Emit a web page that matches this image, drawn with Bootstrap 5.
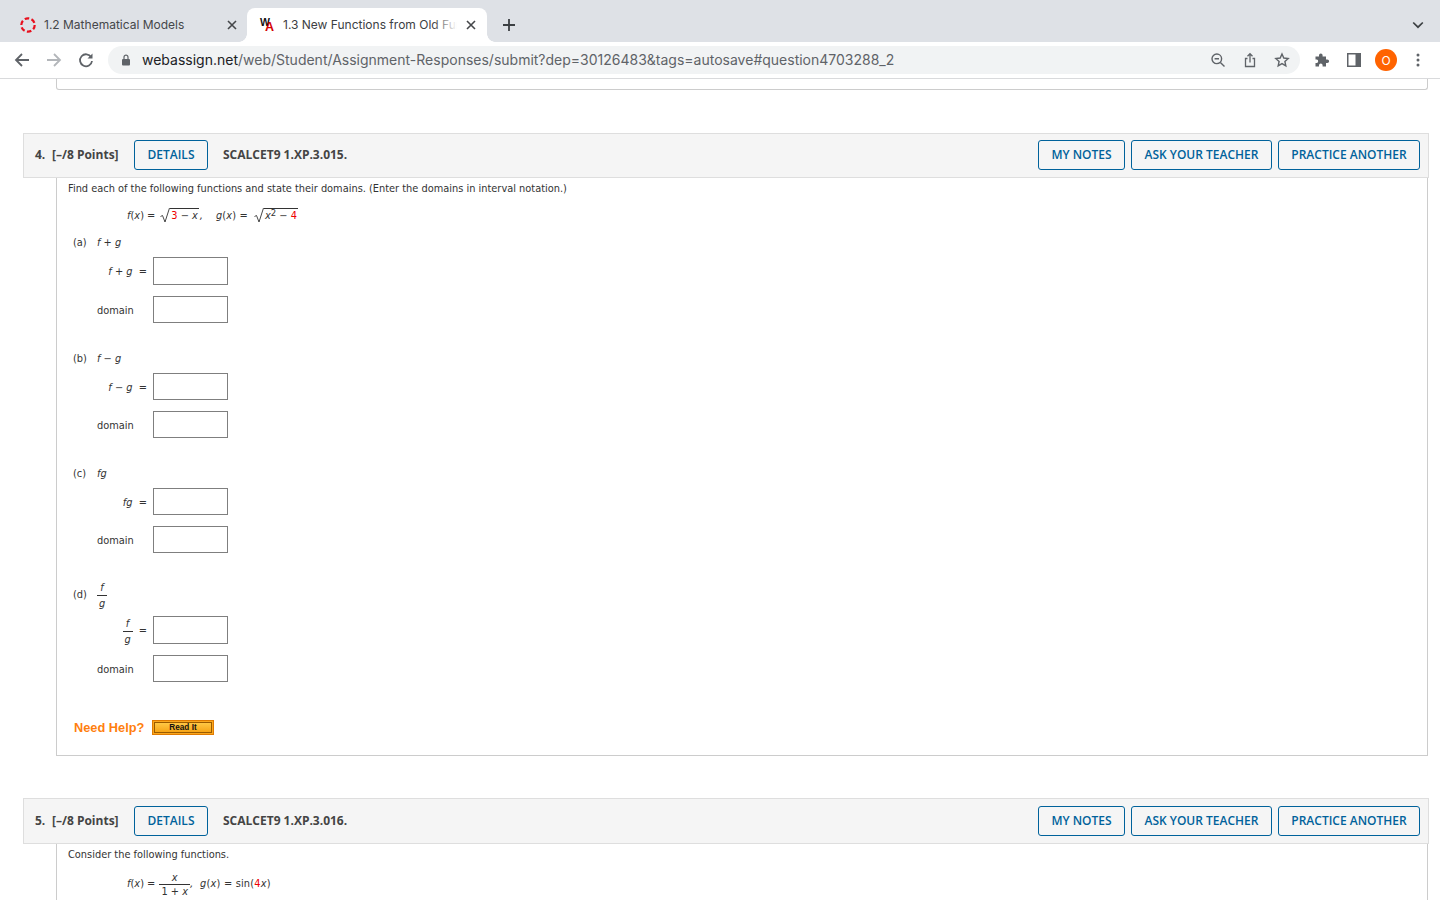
<!DOCTYPE html>
<html lang="en">
<head>
<meta charset="utf-8">
<title>1.3 New Functions from Old Functions</title>
<link href="https://cdn.jsdelivr.net/npm/bootstrap@5.3.0/dist/css/bootstrap.min.css" rel="stylesheet">
<style>
html,body{height:900px;overflow:hidden;background:#fff}
body{font-family:"DejaVu Sans","Liberation Sans",sans-serif;font-size:9.82px;line-height:13px;color:#333}
.tabstrip{height:42px;background:#dee1e6;padding:8px 16px 0 8px;font-family:Inter,"Liberation Sans",sans-serif;font-size:12px;color:#45474a}
.brtab{width:239px;height:34px;padding:0 9px 1px 12px;position:relative}
.brtab-active{width:240px;background:#fff;border-radius:8px 8px 0 0;color:#3c4043;padding-left:12px;padding-right:10px}
.brtab-active::before,.brtab-active::after{content:"";position:absolute;bottom:0;width:8px;height:8px;background:radial-gradient(circle at 0 0,#dee1e6 7.5px,#fff 8px)}
.brtab-active::before{left:-8px}
.brtab-active::after{right:-8px;background:radial-gradient(circle at 100% 0,#dee1e6 7.5px,#fff 8px)}
.tabfav{width:16px;height:16px;flex:none}
.tabname{white-space:nowrap;overflow:hidden;flex:1;margin-left:8px;position:relative}
.tabfade::after{content:"";position:absolute;top:0;right:0;width:24px;height:100%;background:linear-gradient(90deg,rgba(255,255,255,0),#fff)}
.wa-logo{font:bold 11px/1 "Liberation Sans",sans-serif;position:relative;display:block}
.wa-w{position:absolute;left:1px;top:0;color:#111;font-size:10.5px}
.wa-a{position:absolute;left:6px;top:4px;color:#d40000;font-size:12.5px}
.tabclose{width:12px;height:12px;flex:none}
.plusbtn{width:14px;height:14px;margin-left:15px;margin-top:10px}
.chev{width:12px;height:8px;margin-top:13px}
.toolbar{height:37px;background:#fff;border-bottom:1px solid #d9dadc;padding:4px 0 0 14px}
.tb-ico{width:16px;height:16px;flex:none;color:#5f6368}
.navset{height:28px}
.omni{width:1192px;flex:none;height:28px;margin-left:14px;background:#f1f3f4;border-radius:14px;padding:0 10px 1px 13px;font-family:Inter,"Liberation Sans",sans-serif;font-size:14px;color:#5f6368;white-space:nowrap}
.omni-host{color:#202124}
.omni-url{margin-left:3px}
.extset{height:28px;margin-left:14px}
.avatar-o{width:22px;height:22px;margin:0 -3px;background:#ff6300;color:#fff;font-family:Inter,"Liberation Sans",sans-serif;font-size:12px}
.pagearea{padding:0 12px 0 23px}
.prev-end{height:11px;margin-left:33px;border:1px solid #ccc;border-top:0;border-radius:0 0 3px 3px}
.qhead{background:#f5f5f5;border:1px solid #dedede;height:45px;margin-right:-1px;padding:0 8px 1px 11px;font-family:"Open Sans","Liberation Sans",sans-serif;font-weight:700;font-size:12px;color:#444;margin-top:43px}
.qhead .qnum,.qhead .qcode{margin-bottom:1px}
.qhead-two{height:46px;margin-top:42px;padding-bottom:0}
.qhead-two .qnum,.qhead-two .qcode{margin-bottom:2px}
.qnum{width:99px;white-space:nowrap}
.qidx{display:inline-block;width:17px}
.qcode{margin-left:15px;font-weight:700}
.btnset{gap:6px}
.wa-btn{font-family:"Open Sans","Liberation Sans",sans-serif;font-weight:600;font-size:12px;line-height:16px;height:30px;padding:6px 0;color:#00629b;border:1px solid #00629b;background:transparent;border-radius:3px;text-align:center}
.w-det{width:74px}.w-notes{width:87px}.w-ask{width:141px}.w-prac{width:142px}
.qbody{margin-left:33px;border:1px solid #ccc;border-top:0;padding:4px 12px 20px 11px}
.qbody-open{border-bottom:0;padding-bottom:0;height:60px}
.m{font-style:italic}
.rd{color:#e00}
.formula{height:24px;margin:8px 0 0 59px}
.formula-two{height:32px;margin-top:6px}
.radic{display:inline-block;border-top:1px solid #333;line-height:14px;padding:0 1px;margin-right:1px}
.radsvg{width:10px;height:16px;margin:0 0 0 5px;flex:none}
.radsvg-g{margin-left:6px}
.gapg{margin-left:13px;letter-spacing:.15px}
.sup2{font-size:8.5px;position:relative;top:-3px;line-height:0}
.partlabel{height:13px;margin:9px 0 0 5px}
.partlabel-gap{margin-top:29px}
.partcap{width:24px}
.ansrow{margin-top:8px;height:27px}
.ansrow-tall{height:28px}
.ansrow-dom{margin-top:11px}
.anslabel{width:85px;text-align:right;padding-right:6px;flex:none}
.ansrow-nudge .anslabel{padding-top:1px}
.domlabel{width:85px;padding-left:29px;padding-top:1px;flex:none}
.ansbox{width:75px;height:100%;border:1px solid #7f7f7f;background:#fff;border-radius:0;padding:0;margin:0}
.fracwrap{display:inline-flex;flex-direction:column;align-items:stretch;text-align:center;line-height:11px;vertical-align:middle;padding-top:2px}
.fracwrap>span:first-child{border-bottom:1px solid #333;padding:0 3px 2px;min-width:10px}
.fracwrap>span:last-child{padding-top:2px}
.fracwide{margin-left:1px}
.fracwide>span:first-child{padding:0 1px 1px}
.fracwide>span:last-child{padding:1px 2px 0}
.sinpart{margin-left:7px;letter-spacing:.2px}
.partfrac{height:24px;margin:29px 0 0 5px}
.anstall-top{margin-top:10px}
.helpline{margin:38px 0 0 6px;height:15px}
.needhelp{font-family:"Liberation Sans",sans-serif;font-weight:700;font-size:12.8px;color:#ff7f0f;width:78px;white-space:nowrap}
.readit{width:62px;height:15px;background:#f9a71d;border:1px solid #e07b00;padding:1px;font-family:"Liberation Sans",sans-serif;font-weight:700;font-size:8.2px;line-height:10px;color:#111;text-align:center;border-radius:0}
.readit>span{display:block;height:100%;border:1px solid #9a5a00;background:linear-gradient(#ffc845,#f7a516)}
</style>
</head>
<body>
<div class="tabstrip d-flex align-items-start">
  <div class="brtab d-flex align-items-center">
    <svg class="tabfav" viewBox="0 0 16 16"><circle cx="8" cy="8" r="6.7" fill="none" stroke="#e8101e" stroke-width="2.2" stroke-dasharray="4.6 2.4"/></svg>
    <span class="tabname">1.2 Mathematical Models</span>
    <svg class="tabclose" viewBox="0 0 12 12"><path d="M2 2l8 8M10 2l-8 8" stroke="#45474a" stroke-width="1.6"/></svg>
  </div>
  <div class="brtab brtab-active d-flex align-items-center">
    <span class="tabfav wa-logo"><span class="wa-w">W</span><span class="wa-a">A</span></span>
    <span class="tabname tabfade">1.3 New Functions from Old Functions</span>
    <svg class="tabclose ms-2" viewBox="0 0 12 12"><path d="M2 2l8 8M10 2l-8 8" stroke="#45474a" stroke-width="1.6"/></svg>
  </div>
  <svg class="plusbtn" viewBox="0 0 14 14"><path d="M7 1v12M1 7h12" stroke="#3c4043" stroke-width="1.8"/></svg>
  <svg class="chev ms-auto" viewBox="0 0 12 8"><path d="M1.2 1.5 6 6.2l4.8-4.7" fill="none" stroke="#3c4043" stroke-width="1.7"/></svg>
</div>
<div class="toolbar d-flex align-items-start">
  <div class="navset d-flex align-items-center gap-3">
    <svg class="tb-ico" viewBox="0 0 16 16"><path d="M15 8H2.500M8 2 2 8l6 6" fill="none" stroke="#5f6368" stroke-width="1.8"/></svg>
    <svg class="tb-ico" viewBox="0 0 16 16"><path d="M1 8h12.500M8 2l6 6-6 6" fill="none" stroke="#b3b6ba" stroke-width="1.8"/></svg>
    <svg class="tb-ico" viewBox="0 0 16 16"><path d="M13.200 5.200A6 6 0 1 0 14 9" fill="none" stroke="#5f6368" stroke-width="1.8"/><path d="M14.500 1.500v5h-5z" fill="#5f6368"/></svg>
  </div>
  <div class="omni d-flex align-items-center">
    <svg width="10" height="12" viewBox="0 0 10 12" class="me-2"><rect x="1" y="5" width="8" height="6.500" rx="1" fill="#5f6368"/><path d="M3 5V3.200a2 2 0 0 1 4 0V5" fill="none" stroke="#5f6368" stroke-width="1.200"/></svg>
    <span class="omni-url"><span class="omni-host">webassign.net</span>/web/Student/Assignment-Responses/submit?dep=30126483&amp;tags=autosave#question4703288_2</span>
    <div class="ms-auto d-flex align-items-center gap-3">
      <svg class="tb-ico" viewBox="0 0 16 16"><circle cx="6.800" cy="6.800" r="4.800" fill="none" stroke="#5f6368" stroke-width="1.400"/><path d="M4.600 6.800h4.400M10.400 10.400 14.500 14.500" stroke="#5f6368" stroke-width="1.400"/></svg>
      <svg class="tb-ico" viewBox="0 0 16 16"><path d="M5.500 6.500H3.500v8h9v-8h-2" fill="none" stroke="#5f6368" stroke-width="1.300"/><path d="M8 10.500V2M5.500 4.200 8 1.700l2.500 2.500" fill="none" stroke="#5f6368" stroke-width="1.300"/></svg>
      <svg class="tb-ico" viewBox="0 0 16 16"><path d="m8 2 1.800 4 4.400.5-3.300 3 .9 4.300L8 11.600l-3.800 2.200.9-4.300-3.300-3L6.200 6z" fill="none" stroke="#5f6368" stroke-width="1.400"/></svg>
    </div>
  </div>
  <div class="extset d-flex align-items-center gap-3">
    <svg class="tb-ico" viewBox="0 0 16 16"><path d="M1.500 7.500V4.500h3.500V3.200a1.800 1.800 0 0 1 3.600 0V4.500h3.400v3h1.300a1.800 1.800 0 0 1 0 3.600h-1.300v3.400H8.600v-1.300a1.800 1.800 0 0 0-3.600 0v1.300H1.500V11h1.300a1.800 1.800 0 0 0 0-3.500z" fill="#5f6368"/></svg>
    <svg class="tb-ico" viewBox="0 0 16 16"><rect x="1" y="1" width="14" height="14" fill="#5f6368"/><rect x="2.500" y="2.500" width="7" height="11" fill="#fff"/></svg>
    <span class="avatar-o rounded-circle d-flex align-items-center justify-content-center">O</span>
    <svg class="tb-ico" viewBox="0 0 16 16"><circle cx="8" cy="3" r="1.500" fill="#5f6368"/><circle cx="8" cy="8" r="1.500" fill="#5f6368"/><circle cx="8" cy="13" r="1.500" fill="#5f6368"/></svg>
  </div>
</div>

<div class="pagearea">
  <div class="prev-end"></div>

  <div class="qhead d-flex align-items-center">
    <span class="qnum"><span class="qidx">4.</span>[–/8 Points]</span>
    <button class="btn wa-btn w-det" type="button">DETAILS</button>
    <span class="qcode">SCALCET9 1.XP.3.015.</span>
    <div class="ms-auto d-flex btnset">
      <button class="btn wa-btn w-notes" type="button">MY NOTES</button>
      <button class="btn wa-btn w-ask" type="button">ASK YOUR TEACHER</button>
      <button class="btn wa-btn w-prac" type="button">PRACTICE ANOTHER</button>
    </div>
  </div>
  <div class="qbody">
    <div>Find each of the following functions and state their domains. (Enter the domains in interval notation.)</div>
    <div class="formula d-flex align-items-center">
      <span><span class="m">f</span>(<span class="m">x</span>) =</span>
      <svg class="radsvg" viewBox="0 0 10 16"><path d="M.5 9.500 2.500 8.500 5 15 9.500 1" fill="none" stroke="#333" stroke-width=".9"/></svg>
      <span class="radic"><span class="rd">3</span> − <span class="m">x</span></span><span class="m">,</span>
      <span class="gapg"><span class="m">g</span>(<span class="m">x</span>) =</span>
      <svg class="radsvg radsvg-g" viewBox="0 0 10 16"><path d="M.5 9.500 2.500 8.500 5 15 9.500 1" fill="none" stroke="#333" stroke-width=".9"/></svg>
      <span class="radic"><span class="m">x</span><span class="sup2">2</span> − <span class="rd">4</span></span>
    </div>

    <div class="partlabel d-flex"><span class="partcap">(a)</span><span><span class="m">f</span> + <span class="m">g</span></span></div>
    <div class="ansrow ansrow-tall d-flex align-items-center"><span class="anslabel"><span class="m">f</span> + <span class="m">g</span> &nbsp;=</span><input class="ansbox" type="text" aria-label="f + g"></div>
    <div class="ansrow ansrow-dom d-flex align-items-center"><span class="domlabel">domain</span><input class="ansbox" type="text" aria-label="domain"></div>

    <div class="partlabel partlabel-gap d-flex"><span class="partcap">(b)</span><span><span class="m">f</span> − <span class="m">g</span></span></div>
    <div class="ansrow ansrow-nudge d-flex align-items-center"><span class="anslabel"><span class="m">f</span> − <span class="m">g</span> &nbsp;=</span><input class="ansbox" type="text" aria-label="f - g"></div>
    <div class="ansrow ansrow-dom d-flex align-items-center"><span class="domlabel">domain</span><input class="ansbox" type="text" aria-label="domain"></div>

    <div class="partlabel partlabel-gap d-flex"><span class="partcap">(c)</span><span class="m">fg</span></div>
    <div class="ansrow ansrow-nudge d-flex align-items-center"><span class="anslabel"><span class="m">fg</span> &nbsp;=</span><input class="ansbox" type="text" aria-label="fg"></div>
    <div class="ansrow ansrow-dom d-flex align-items-center"><span class="domlabel">domain</span><input class="ansbox" type="text" aria-label="domain"></div>

    <div class="partfrac d-flex align-items-center"><span class="partcap">(d)</span><span class="fracwrap m"><span>f</span><span>g</span></span></div>
    <div class="ansrow ansrow-tall anstall-top d-flex align-items-center"><span class="anslabel"><span class="fracwrap m"><span>f</span><span>g</span></span> &nbsp;=</span><input class="ansbox" type="text" aria-label="f over g"></div>
    <div class="ansrow ansrow-dom d-flex align-items-center"><span class="domlabel">domain</span><input class="ansbox" type="text" aria-label="domain"></div>

    <div class="helpline d-flex align-items-center">
      <span class="needhelp">Need Help?</span>
      <button class="btn readit" type="button"><span>Read It</span></button>
    </div>
  </div>

  <div class="qhead qhead-two d-flex align-items-center">
    <span class="qnum"><span class="qidx">5.</span>[–/8 Points]</span>
    <button class="btn wa-btn w-det" type="button">DETAILS</button>
    <span class="qcode">SCALCET9 1.XP.3.016.</span>
    <div class="ms-auto d-flex btnset">
      <button class="btn wa-btn w-notes" type="button">MY NOTES</button>
      <button class="btn wa-btn w-ask" type="button">ASK YOUR TEACHER</button>
      <button class="btn wa-btn w-prac" type="button">PRACTICE ANOTHER</button>
    </div>
  </div>
  <div class="qbody qbody-open">
    <div>Consider the following functions.</div>
    <div class="formula formula-two d-flex align-items-center">
      <span><span class="m">f</span>(<span class="m">x</span>) =&nbsp;</span>
      <span class="fracwrap fracwide"><span class="m">x</span><span>1 + <span class="m">x</span></span></span><span class="m">,</span>
      <span class="sinpart"><span class="m">g</span>(<span class="m">x</span>) = sin(<span class="rd">4</span><span class="m">x</span>)</span>
    </div>
  </div>
</div>
<script src="https://cdn.jsdelivr.net/npm/bootstrap@5.3.0/dist/js/bootstrap.bundle.min.js"></script>
</body>
</html>
